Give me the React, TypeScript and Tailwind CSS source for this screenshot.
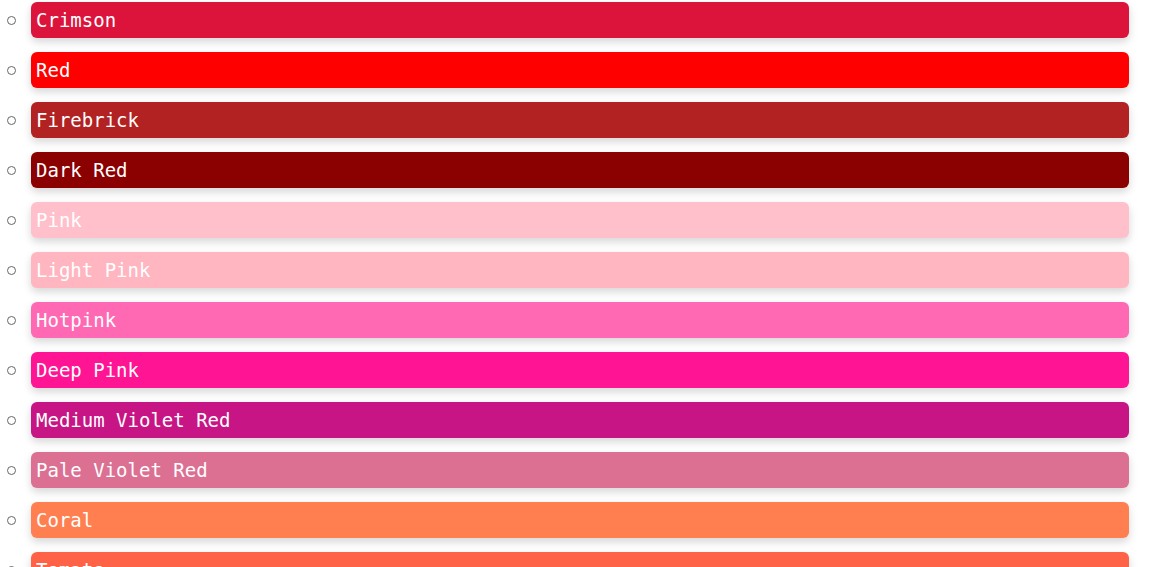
import React from "react";

const colors: { name: string; hex: string }[] = [
  { name: "Crimson", hex: "#dc143c" },
  { name: "Red", hex: "#ff0000" },
  { name: "Firebrick", hex: "#b22222" },
  { name: "Dark Red", hex: "#8b0000" },
  { name: "Pink", hex: "#ffc0cb" },
  { name: "Light Pink", hex: "#ffb6c1" },
  { name: "Hotpink", hex: "#ff69b4" },
  { name: "Deep Pink", hex: "#ff1493" },
  { name: "Medium Violet Red", hex: "#c71585" },
  { name: "Pale Violet Red", hex: "#db7093" },
  { name: "Coral", hex: "#ff7f50" },
  { name: "Tomato", hex: "#ff6347" },
  { name: "Orange Red", hex: "#ff4500" },
  { name: "Dark Orange", hex: "#ff8c00" },
];

export default function App() {
  return (
    <div className="min-h-screen bg-white">
      <ul className="pl-[7px] pr-[20px] pt-[2px]">
        {colors.map((c) => (
          <li key={c.name} className="mb-[14px] flex items-center">
            {/* hollow bullet */}
            <span className="h-[9px] w-[9px] shrink-0 rounded-full border border-[#666]" />
            <div
              className="ml-[15px] h-9 flex-1 rounded-md px-[5px] text-[19px] leading-9 text-white shadow-[0_4px_8px_rgba(0,0,0,0.16)]"
              style={{ backgroundColor: c.hex, fontFamily: '"DejaVu Sans Mono", monospace' }}
            >
              {c.name}
            </div>
          </li>
        ))}
      </ul>
    </div>
  );
}
